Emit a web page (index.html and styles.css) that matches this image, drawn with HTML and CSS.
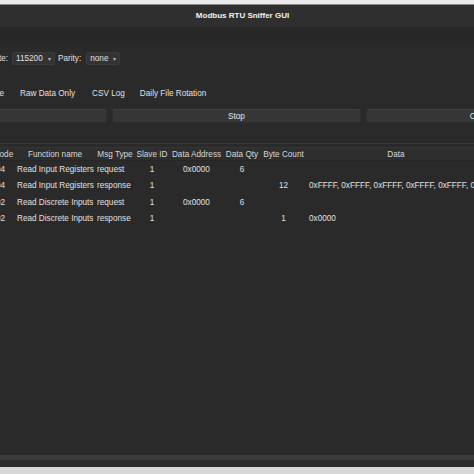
FILE: index.html
```html
<!DOCTYPE html>
<html lang="en">
<head>
    <meta charset="UTF-8">
    <meta name="viewport" content="width=device-width, initial-scale=1.0">
    <title>Modbus RTU Sniffer GUI</title>
    <link rel="stylesheet" href="styles.css">
</head>
<body>
    <div class="top-strip"></div>
    <div class="window">
        <div class="titlebar">Modbus RTU Sniffer GUI</div>
        <div class="menubar"></div>
        <div class="main">
            <div class="controls">
                <div class="lead">
                    <span class="label">Baud rate:</span>
                </div>
                <span class="combo combo-baud">115200<i class="arrow">▾</i></span>
                <span class="label label-parity">Parity:</span>
                <span class="combo combo-parity">none<i class="arrow">▾</i></span>
            </div>
            <div class="checks">
                <div class="lead"><span class="check">Hex Mode</span></div>
                <span class="check check-raw">Raw Data Only</span>
                <span class="check check-csv">CSV Log</span>
                <span class="check check-daily">Daily File Rotation</span>
            </div>
            <div class="buttons">
                <button class="btn"></button>
                <button class="btn">Stop</button>
                <button class="btn">Clear Table</button>
            </div>
            <div class="table-frame">
                <table class="log-table">
                    <colgroup>
                        <col style="width: 55px">
                        <col style="width: 80px">
                        <col style="width: 40px">
                        <col style="width: 34px">
                        <col style="width: 55px">
                        <col style="width: 36px">
                        <col style="width: 47px">
                        <col style="width: 178px">
                    </colgroup>
                    <thead>
                        <tr>
                            <th>Function code</th>
                            <th>Function name</th>
                            <th>Msg Type</th>
                            <th>Slave ID</th>
                            <th>Data Address</th>
                            <th>Data Qty</th>
                            <th>Byte Count</th>
                            <th>Data</th>
                        </tr>
                    </thead>
                    <tbody id="rows"></tbody>
                </table>
            </div>
            <div class="hscroll"></div>
            <div class="statusbar"></div>
        </div>
    </div>
    <div class="bottom-strip"></div>
<script>
    const frames = [
        ['0x04', 'Read Input Registers', 'request', '1', '0x0000', '6', '', ''],
        ['0x04', 'Read Input Registers', 'response', '1', '', '', '12', '0xFFFF, 0xFFFF, 0xFFFF, 0xFFFF, 0xFFFF, 0xFFFF'],
        ['0x02', 'Read Discrete Inputs', 'request', '1', '0x0000', '6', '', ''],
        ['0x02', 'Read Discrete Inputs', 'response', '1', '', '', '1', '0x0000']
    ];
    const cls = ['c-code', 'c-left', 'c-left', 'c-mid', 'c-mid', 'c-mid', 'c-mid', 'c-left'];
    const tbody = document.getElementById('rows');
    frames.forEach(f => {
        const tr = document.createElement('tr');
        f.forEach((v, i) => {
            const td = document.createElement('td');
            td.className = cls[i];
            td.textContent = v;
            tr.appendChild(td);
        });
        tbody.appendChild(tr);
    });
</script>
</body>
</html>
```

FILE: styles.css
```css
body {
    margin: 0;
    background: #2a2a2a;
    font-family: 'Liberation Sans', Arial, sans-serif;
    font-size: 8.2px;
    color: #e0e0e0;
    overflow: hidden;
    height: 474px;
    position: relative;
}
.top-strip {
    height: 4px;
    background: #ececec;
    border-bottom: 1px solid #8a8a8a;
}
.window {
    margin-left: -150px;
    width: 773px;
}
.titlebar {
    height: 22px;
    line-height: 22px;
    background: #2f2f2f;
    text-align: center;
    padding-left: 12px;
    font-size: 8px;
    font-weight: bold;
    color: #f2f2f2;
}
.menubar {
    height: 18px;
    background: #272727;
}
.main {
    padding-top: 7px;
}
.lead {
    flex: 0 0 auto;
    display: flex;
    justify-content: flex-end;
    align-items: center;
    white-space: nowrap;
}
.controls {
    display: flex;
    align-items: center;
    height: 13px;
}
.controls .lead {
    width: 158px;
}
.combo {
    display: flex;
    align-items: center;
    justify-content: space-between;
    box-sizing: border-box;
    height: 13px;
    padding: 0 3px;
    background: #333333;
    border: 1px solid #3b3b3b;
    border-radius: 2px;
    color: #e0e0e0;
}
.arrow {
    font-style: normal;
    font-size: 6px;
    color: #b8b8b8;
}
.combo-baud {
    width: 43px;
    margin-left: 4px;
}
.label-parity {
    margin-left: 3px;
}
.combo-parity {
    width: 34px;
    margin-left: 5px;
}
.checks {
    display: flex;
    align-items: center;
    height: 14px;
    margin-top: 21px;
    white-space: nowrap;
}
.checks .lead {
    width: 154px;
}
.check-raw {
    margin-left: 16px;
}
.check-csv {
    margin-left: 17px;
}
.check-daily {
    margin-left: 15px;
}
.buttons {
    display: flex;
    gap: 5px;
    padding: 0 8px;
    margin-top: 9px;
}
.btn {
    flex: 1;
    height: 14px;
    padding: 0;
    background: #363636;
    border: 1px solid #2e2e2e;
    border-top-color: #3d3d3d;
    border-radius: 2px;
    font-family: inherit;
    font-size: 8.2px;
    color: #e6e6e6;
    white-space: nowrap;
}
.table-frame {
    margin-top: 20px;
    margin-left: 110px;
    height: 312px;
    border-top: 1px solid #393939;
    padding-top: 3px;
    box-sizing: border-box;
    overflow: hidden;
}
.log-table {
    border-collapse: collapse;
    table-layout: fixed;
    width: 525px;
}
.log-table th {
    height: 12px;
    padding: 0;
    font-weight: normal;
    text-align: center;
    color: #d8d8d8;
    background: #2e2e2e;
    border-top: 1px solid #353535;
    border-bottom: 1px solid #262626;
    white-space: nowrap;
    overflow: hidden;
}
.log-table td {
    height: 16.5px;
    padding: 0 2px;
    white-space: nowrap;
    overflow: hidden;
}
.c-code {
    text-align: right;
    padding-right: 10px !important;
}
.c-left {
    text-align: left;
}
.c-mid {
    text-align: center;
}
.hscroll {
    height: 5px;
    background: #3b3b3b;
}
.statusbar {
    height: 6px;
    background: #2c2c2c;
}
.bottom-strip {
    position: absolute;
    left: 0;
    right: 0;
    bottom: 0;
    height: 7px;
    background: #d8d8d8;
}
```
